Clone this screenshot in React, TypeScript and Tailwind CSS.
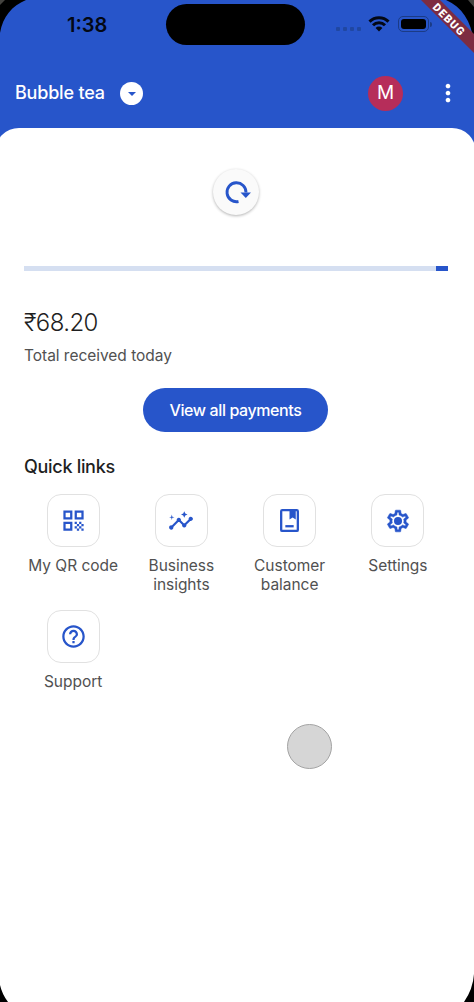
import type { ReactNode } from 'react';
import { MdHelpOutline, MdInsights, MdMoreVert, MdQrCode } from 'react-icons/md';

const BookIcon = () => (
  <svg viewBox="0 0 24 24" className="size-[25px]" fill="none" stroke="currentColor" strokeWidth="2.2">
    <rect x="4" y="2" width="16" height="20" rx="1" />
    <path d="M12 2h6v9l-3-2-3 2z" fill="currentColor" stroke="none" />
    <path d="M8 17.500h8" />
  </svg>
);

const GearIcon = () => (
  <svg viewBox="0 0 24 24" className="size-[26px]" fill="currentColor">
    <path
      stroke="currentColor"
      strokeWidth=".5"
      d="M19.43 12.980c.04-.32.07-.64.07-.98s-.03-.66-.07-.98l2.110-1.650c.19-.15.24-.42.12-.64l-2-3.460a.5.5 0 0 0-.61-.22l-2.490 1c-.52-.4-1.080-.73-1.690-.98l-.38-2.650A.49.49 0 0 0 14 2h-4c-.25 0-.46.18-.49.42l-.38 2.650c-.61.25-1.170.59-1.690.98l-2.490-1a.5.5 0 0 0-.61.22l-2 3.460c-.13.22-.07.49.12.64l2.110 1.650c-.04.32-.07.65-.07.98s.03.66.07.98l-2.110 1.650c-.19.15-.24.42-.12.64l2 3.460c.12.22.39.3.61.22l2.490-1c.52.4 1.080.73 1.690.98l.38 2.650c.03.24.24.42.49.42h4c.25 0 .46-.18.49-.42l.38-2.650c.61-.25 1.170-.59 1.690-.98l2.490 1c.23.09.49 0 .61-.22l2-3.460c.12-.22.07-.49-.12-.64zM17.450 11.270c.04.31.05.52.05.73s-.02.43-.05.73l-.14 1.130.89.7 1.080.84-.7 1.210-1.270-.51-1.040-.42-.9.68c-.43.32-.84.56-1.250.73l-1.060.43-.16 1.130-.2 1.350h-1.400l-.19-1.350-.16-1.130-1.060-.43c-.43-.18-.83-.41-1.230-.71l-.91-.7-1.060.43-1.270.51-.7-1.210 1.080-.84.89-.7-.14-1.130c-.03-.31-.05-.54-.05-.74s.02-.43.05-.73l.14-1.130-.89-.7-1.080-.84.7-1.210 1.270.51 1.040.42.9-.68c.43-.32.84-.56 1.250-.73l1.060-.43.16-1.130.2-1.350h1.390l.19 1.350.16 1.130 1.060.43c.43.18.83.41 1.230.71l.91.7 1.060-.43 1.270-.51.7 1.210-1.070.85-.89.7z"
    />
    <circle cx="12" cy="12" r="3.700" />
  </svg>
);

const quickLinks: { label: string; icon: ReactNode }[] = [
  { label: 'My QR code', icon: <MdQrCode className="size-[27px]" /> },
  { label: 'Business insights', icon: <MdInsights className="size-[26px]" /> },
  { label: 'Customer balance', icon: <BookIcon /> },
  { label: 'Settings', icon: <GearIcon /> },
  { label: 'Support', icon: <MdHelpOutline className="size-[27px]" /> },
];

const StatusBar = () => (
  <div className="flex h-12 items-center">
    <span className="ml-[67px] mt-px w-[99px] text-[20px] font-semibold leading-6 text-[#030814]">1:38</span>
    <div className="mt-[1px] h-[41px] w-[139px] rounded-full bg-black" />
    <div className="ml-[31px] mt-[10px] flex gap-[3px]">
      <i className="size-1 rounded-[1px] bg-[#2047a2]" />
      <i className="size-1 rounded-[1px] bg-[#2047a2]" />
      <i className="size-1 rounded-[1px] bg-[#2047a2]" />
      <i className="size-1 rounded-[1px] bg-[#2047a2]" />
    </div>
    <svg viewBox="0 0 22 16" className="ml-[7px] h-4 w-[22px]" fill="none" stroke="#030814" strokeWidth="3">
      <path d="M1.500 5.600a13.500 13.500 0 0 1 19 0" />
      <path d="M5 9.300a8.500 8.500 0 0 1 12 0" />
      <path d="M7.600 12a4.800 4.800 0 0 1 6.800 0L11 15.500z" fill="#030814" stroke="none" />
    </svg>
    <div className="ml-[8px] h-4 w-[31px] rounded-[5px] border border-[#1b3b86] p-[2px]">
      <div className="h-full rounded-[3px] bg-black" />
    </div>
    <div className="ml-[1px] h-[5px] w-[2px] rounded-r-full bg-[#1b3b86]" />
  </div>
);

const ScreenCorners = () => (
  <>
    <svg viewBox="0 0 26 34" className="absolute left-0 top-0 h-[34px] w-[26px]">
      <path d="M0 0h26C12 6 3 16 0 33z" fill="#000" />
      <path d="M0 0h5L0 5z" fill="#44433f" />
    </svg>
    <svg viewBox="0 0 54 56" className="absolute right-0 top-0 h-14 w-[54px]">
      <path d="M26 0h28v42C51 21 42 7 26 0z" fill="#000" />
      <path d="M48 0h6v7z" fill="#44433f" />
      <path d="M1 0h19L54 34v19z" fill="#7d2c42" />
      <text
        x="28.500"
        y="23"
        transform="rotate(45 28.500 19.500)"
        textAnchor="middle"
        fontFamily="Roboto"
        fontWeight="900"
        fontSize="11"
        textLength="40"
        fill="#fff"
      >
        DEBUG
      </text>
    </svg>
    <svg viewBox="0 0 8 17" className="absolute bottom-0 left-0 h-[17px] w-2">
      <path d="M0 0q2 9 8 17H0z" />
    </svg>
    <svg viewBox="0 0 10 28" className="absolute bottom-0 right-0 h-7 w-[10px]">
      <path d="M10 0Q9 15 0 28h10z" />
    </svg>
  </>
);

export default function App() {
  return (
    <div className="relative flex h-[1002px] w-[474px] flex-col overflow-hidden bg-[#2755ca] font-['Inter',sans-serif]">
      <header className="h-32">
        <StatusBar />
        <div className="flex h-[90px] items-center text-white">
          <span className="ml-[15px] w-[105px] whitespace-nowrap text-[18px] font-medium leading-6 tracking-[-0.2px]">
            Bubble tea
          </span>
          <div className="flex size-[23px] items-center justify-center rounded-full bg-white">
            <svg viewBox="0 0 8 4" className="mt-[2px] h-1 w-2" fill="#2755ca">
              <path d="M0 0h8L4 4z" />
            </svg>
          </div>
          <div className="ml-[225px] flex size-[35px] items-center justify-center rounded-full bg-[#b62d5a] pt-px text-[19px]">
            M
          </div>
          <MdMoreVert className="ml-[31px] size-7" />
        </div>
      </header>

      <main className="-ml-[5px] -mr-[2px] flex-1 rounded-t-[24px] bg-white pl-[5px]">
        <div className="ml-[213px] mt-[41px] flex size-[46px] items-center justify-center rounded-full bg-[#fafafa] shadow-[0_1px_3px_rgba(0,0,0,0.3)]">
          <svg viewBox="0 0 26 24" className="ml-[3px] h-6 w-[26px]" fill="none" stroke="#2755ca" strokeWidth="2.9">
            <path d="M13.500 21.500A9.500 9.500 0 1 1 21 12.500" />
            <path d="M15.500 12.500h10.500L20.800 18z" fill="#2755ca" stroke="none" />
          </svg>
        </div>

        <div className="ml-6 mt-[51px] flex h-[5px] w-[424px] justify-end bg-[#d5dff1]">
          <div className="w-3 bg-[#2755ca]" />
        </div>

        <div className="ml-6 mt-[36px] text-[24px] font-light leading-8 tracking-[-0.6px] text-[#1f1f1f]">₹68.20</div>
        <p className="ml-6 mt-[7px] text-[15.500px] leading-5 tracking-[-0.03px] text-[#515151]">Total received today</p>

        <button className="ml-[143px] mt-[22px] block h-11 w-[185px] rounded-full bg-[#2755ca] text-[16px] font-medium tracking-[-0.4px] text-white">
          View all payments
        </button>

        <h2 className="ml-6 mt-[23px] text-[18px] font-medium leading-6 tracking-[-0.3px] text-[#1f1f1f]">Quick links</h2>
        <div className="ml-[19px] mt-[15px] grid w-[433px] grid-cols-4 gap-y-[16px]">
          {quickLinks.map((link) => (
            <div key={link.label} className="flex flex-col items-center">
              <div className="flex size-[53px] items-center justify-center rounded-[14px] border border-[#e1e1e1] text-[#2755ca]">
                {link.icon}
              </div>
              <span className="mt-[9px] w-[92px] text-center text-[15.500px] leading-[19px] tracking-[-0.03px] text-[#515151]">
                {link.label}
              </span>
            </div>
          ))}
        </div>
      </main>

      <div className="absolute left-[287px] top-[724px] size-[45px] rounded-full border border-[#a3a3a3] bg-[#d6d6d6]" />
      <ScreenCorners />
    </div>
  );
}
